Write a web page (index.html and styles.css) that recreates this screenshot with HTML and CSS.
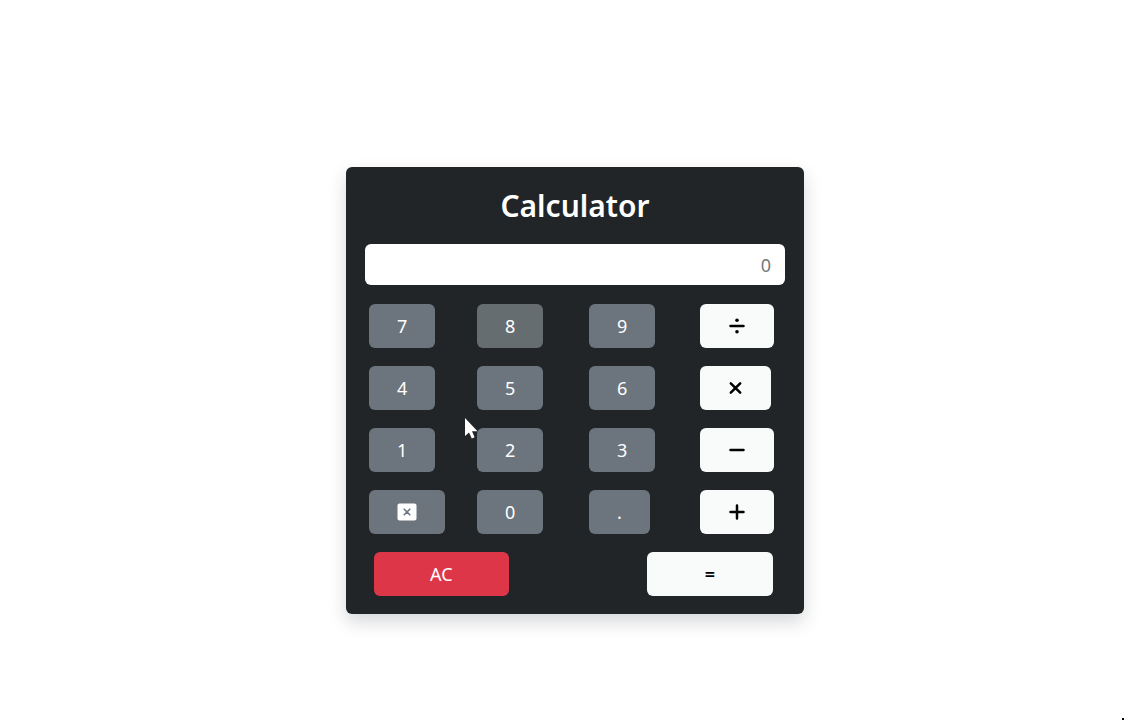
FILE: index.html
```html
<!DOCTYPE html>
<html lang="en">
  <head>
    <meta charset="UTF-8" />
    <meta name="viewport" content="width=device-width, initial-scale=1.0" />
    <title>Calculator</title>
    <link rel="stylesheet" href="styles.css">
  </head>
  <body>
    <main class="calculator">
      <h1>Calculator</h1>
      <input type="text" class="display" placeholder="0" aria-label="Result" />
      <div class="keys">
        <button class="btn">7</button>
        <button class="btn active">8</button>
        <button class="btn">9</button>
        <button class="btn light" aria-label="Divide">
          <svg width="18" height="20" viewBox="0 0 18 20">
            <path d="M2.500 10H15.500" />
            <circle cx="9" cy="4.300" r="1.800" />
            <circle cx="9" cy="15.700" r="1.800" />
          </svg>
        </button>

        <button class="btn">4</button>
        <button class="btn">5</button>
        <button class="btn">6</button>
        <button class="btn light" aria-label="Multiply">
          <svg width="15" height="20" viewBox="0 0 15 20">
            <path d="M2.800 5.300L12.200 14.700M12.200 5.300L2.800 14.700" />
          </svg>
        </button>

        <button class="btn">1</button>
        <button class="btn">2</button>
        <button class="btn">3</button>
        <button class="btn light" aria-label="Subtract">
          <svg width="18" height="20" viewBox="0 0 18 20">
            <path d="M2.500 10H15.500" />
          </svg>
        </button>

        <button class="btn" aria-label="Delete">
          <svg class="delete" width="20" height="20" viewBox="0 0 20 20">
            <rect x="0.500" y="1.500" width="19" height="17" rx="2" />
            <path d="M7.200 7.200L12.800 12.800M12.800 7.200L7.200 12.800" />
          </svg>
        </button>
        <button class="btn">0</button>
        <button class="btn">.</button>
        <button class="btn light" aria-label="Add">
          <svg width="18" height="20" viewBox="0 0 18 20">
            <path d="M2.500 10H15.500M9 3.500V16.500" />
          </svg>
        </button>
      </div>
      <div class="bottom">
        <button class="btn wide danger">AC</button>
        <button class="btn wide light equals">=</button>
      </div>
    </main>
    <svg class="cursor" width="14" height="22" viewBox="0 0 14 22">
      <path d="M1 0V18L5 14.500L7.800 20.500L10.600 19.200L8 13.300H13.500Z" />
    </svg>
    <div class="corner"></div>
  </body>
</html>
```
FILE: styles.css
```css
* {
  box-sizing: border-box;
}
body {
  margin: 0;
  min-height: 100vh;
  padding: 61px 0 0 26px;
  display: flex;
  justify-content: center;
  align-items: center;
  background-color: white;
  font-family: "Noto Sans", "Open Sans", sans-serif;
}
.calculator {
  width: 458px;
  padding: 19px 19px 18px;
  border-radius: 6px;
  background-color: #212527;
  box-shadow: 0 8px 18px rgba(33, 37, 50, 0.18);
}
h1 {
  margin: 0 0 18px;
  color: white;
  font-size: 30px;
  font-weight: 600;
  line-height: 40px;
  text-align: center;
}
.display {
  display: block;
  width: 100%;
  height: 41px;
  padding: 0 14px;
  border: none;
  border-radius: 6px;
  background-color: white;
  font: inherit;
  font-size: 18px;
  text-align: right;
}
.display::placeholder {
  color: #75797d;
  opacity: 1;
}

/* keys */
.keys {
  display: grid;
  grid-template-columns: 108px 112px 111px auto;
  row-gap: 18px;
  justify-items: start;
  padding: 19px 4px 18px;
}
.bottom {
  display: flex;
  justify-content: space-between;
  padding: 0 12px 0 9px;
}
.btn {
  display: flex;
  align-items: center;
  justify-content: center;
  height: 44px;
  padding: 0 28px;
  border: none;
  border-radius: 6px;
  background-color: #6c757d;
  color: white;
  font: inherit;
  font-size: 18px;
  cursor: pointer;
}
.active {
  background-color: #656d71;
}
.light {
  background-color: #f9fbfb;
  color: black;
}
.danger {
  background-color: #dc3648;
}
.wide {
  padding: 0 56px;
}
.equals {
  padding: 0 58px;
  font-weight: 600;
}
.btn svg {
  fill: black;
  stroke: black;
  stroke-width: 2.5;
  stroke-linecap: round;
}
.btn circle {
  stroke: none;
}
.btn .delete {
  fill: white;
  stroke: none;
}
.delete path {
  stroke: #6c757d;
  stroke-width: 1.6;
}

.cursor {
  position: absolute;
  left: 464px;
  top: 418px;
  fill: white;
  pointer-events: none;
}
.corner {
  position: fixed;
  right: 0;
  bottom: 0;
  width: 2px;
  height: 2px;
  background-color: black;
}
```
